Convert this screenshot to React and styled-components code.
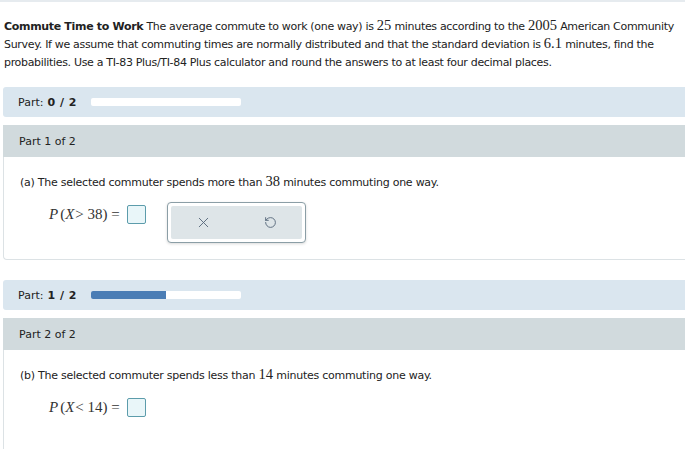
import React from 'react'
import styled, { createGlobalStyle } from 'styled-components'
import { X, RotateCcw } from 'lucide-react'

const GlobalStyle = createGlobalStyle`
  body {
    margin: 0;
    background: #fff;
    font-family: 'DejaVu Sans', Verdana, sans-serif;
    color: #333;
  }
`

const PageUI = styled('div')`
  width: 685px;
  overflow: hidden;
  border-top: 2px solid #e6ebef;
`

const IntroUI = styled('p')`
  margin: 16px 6px 0 4px;
  font-size: 11px;
  line-height: 18px;
  letter-spacing: -0.32px;
  color: #222;

  strong {
    font-weight: bold;
  }
`

const Num = styled('span')`
  font-family: 'Liberation Serif', 'Times New Roman', serif;
  font-size: 14.5px;
  line-height: 1;
  letter-spacing: 0;
`

const PartBarUI = styled('div')`
  display: flex;
  align-items: center;
  height: 30px;
  margin: ${({ $top }) => $top}px 0 0 3px;
  padding-left: 15px;
  background: #dae6ef;
  border-radius: 3px 0 0 3px;
  font-size: 11px;
  color: #222;

  b {
    margin-left: 4px;
    font-weight: bold;
    letter-spacing: 0.5px;
  }
`

const ProgressUI = styled('div')`
  width: 150px;
  height: 8px;
  margin-left: 14px;
  background: #fff;
  border-radius: 2px;
  overflow: hidden;

  &::before {
    content: '';
    display: block;
    height: 100%;
    width: ${({ $value }) => $value * 100}%;
    background: #4a7db5;
  }
`

const SectionUI = styled('section')`
  margin: 8px 0 0 3px;
`

const SectionHeaderUI = styled('div')`
  display: flex;
  align-items: center;
  height: 32px;
  padding-left: 16px;
  background: #d1dadd;
  font-size: 11px;
  color: #222;
`

const SectionBodyUI = styled('div')`
  padding: 17px 0 ${({ $last }) => ($last ? 40 : 16)}px 16px;
  border-left: 1px solid #dce2e5;
  border-bottom: ${({ $last }) => ($last ? 'none' : '1px solid #dce2e5')};
  border-radius: 0 0 0 4px;
`

const QuestionUI = styled('div')`
  font-size: 11px;
  line-height: 18px;
  letter-spacing: -0.25px;
  color: #222;
`

const AnswerRowUI = styled('div')`
  display: flex;
  align-items: flex-start;
  gap: 21px;
  margin: 10px 0 0 29px;
`

const MathUI = styled('div')`
  display: flex;
  align-items: center;
  height: 22px;
  margin-top: 1px;
  font-family: 'Liberation Serif', 'Times New Roman', serif;
  font-size: 15px;
  color: #333;
  white-space: pre;

  i {
    font-style: italic;
  }
`

const ParenUI = styled('span')`
  margin-left: 2px;
`

const OpUI = styled('span')`
  margin-left: 1px;
`

const InputBoxUI = styled('span')`
  display: inline-block;
  width: 17px;
  height: 17px;
  margin-left: 7px;
  border: 1px solid #5c9cab;
  border-radius: 2px;
  background: #e9f6f9;
`

const ToolsUI = styled('div')`
  display: flex;
  width: 131px;
  height: 33px;
  padding: 3px;
  border: 1px solid #8b9ea6;
  border-radius: 4px;
  background: #fff;
  box-shadow: 0 1px 3px rgba(0, 0, 0, 0.15);
`

const ToolsInnerUI = styled('div')`
  display: flex;
  flex: 1;
  align-items: center;
  justify-content: space-between;
  padding: 0 25px 0 24px;
  background: #dee5e8;
  border-radius: 2px;
  color: #56687a;
`

const Answer = ({ op, value, tools }) => (
  <AnswerRowUI>
    <MathUI>
      <i>P</i>
      <ParenUI>(</ParenUI>
      <i>X</i>
      <OpUI>{op}</OpUI>
      <span> {value}) =</span>
      <InputBoxUI />
    </MathUI>
    {tools && (
      <ToolsUI>
        <ToolsInnerUI>
          <X size={17} strokeWidth={1.3} />
          <RotateCcw size={13} strokeWidth={1.7} />
        </ToolsInnerUI>
      </ToolsUI>
    )}
  </AnswerRowUI>
)

const PartBar = ({ top, done }) => (
  <PartBarUI $top={top}>
    Part:<b>{done} / 2</b>
    <ProgressUI $value={done / 2} />
  </PartBarUI>
)

export default function App() {
  return (
    <PageUI>
      <GlobalStyle />
      <IntroUI>
        <strong>Commute Time to Work</strong> The average commute to work (one way) is{' '}
        <Num>25</Num> minutes according to the <Num>2005</Num> American Community Survey. If we
        assume that commuting times are normally distributed and that the standard deviation is{' '}
        <Num>6.1</Num> minutes, find the probabilities. Use a TI-83 Plus/TI-84 Plus calculator
        and round the answers to at least four decimal places.
      </IntroUI>

      <PartBar top={15} done={0} />
      <SectionUI>
        <SectionHeaderUI>Part 1 of 2</SectionHeaderUI>
        <SectionBodyUI>
          <QuestionUI>
            (a) The selected commuter spends more than <Num>38</Num> minutes commuting one way.
          </QuestionUI>
          <Answer op=">" value="38" tools />
        </SectionBodyUI>
      </SectionUI>

      <PartBar top={20} done={1} />
      <SectionUI>
        <SectionHeaderUI>Part 2 of 2</SectionHeaderUI>
        <SectionBodyUI $last>
          <QuestionUI>
            (b) The selected commuter spends less than <Num>14</Num> minutes commuting one way.
          </QuestionUI>
          <Answer op="<" value="14" />
        </SectionBodyUI>
      </SectionUI>
    </PageUI>
  )
}
